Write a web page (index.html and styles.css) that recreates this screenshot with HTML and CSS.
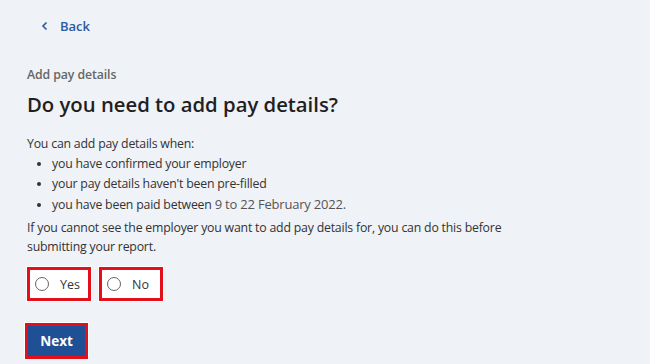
FILE: index.html
```html
<!DOCTYPE html>
<html lang="en">
<head>
<meta charset="utf-8">
<title>Add pay details</title>
<link rel="stylesheet" href="styles.css">
</head>
<body>
<main class="page">
  <a class="back" href="#">
    <svg class="back-icon" width="8" height="10" viewBox="0 0 8 10" aria-hidden="true"><path d="M5.5 1.5 L2 5 L5.5 8.5" fill="none" stroke="#2a5aa0" stroke-width="1.6"/></svg>
    <span>Back</span>
  </a>
  <p class="caption">Add pay details</p>
  <h1 class="title">Do you need to add pay details?</h1>
  <p class="lead">You can add pay details when:</p>
  <ul class="list">
    <li>you have confirmed your employer</li>
    <li>your pay details haven't been pre-filled</li>
    <li>you have been paid between <span class="dates">9 to 22 February 2022.</span></li>
  </ul>
  <p class="note">If you cannot see the employer you want to add pay details for, you can do this before submitting your report.</p>
  <div class="options">
    <label class="option"><span class="radio"></span><span>Yes</span></label>
    <label class="option"><span class="radio"></span><span>No</span></label>
  </div>
  <button class="next" type="button">Next</button>
</main>
</body>
</html>
```
FILE: styles.css
```css
html, body {
  margin: 0;
  padding: 0;
  background: #eff2f6;
}
body {
  font-family: "Open Sans", "Noto Sans", sans-serif;
  color: #333;
  font-size: 12.3px;
  letter-spacing: -0.2px;
}
.page {
  padding: 16px 0 0 27px;
  display: flex;
  flex-direction: column;
  align-items: flex-start;
}
.back {
  display: flex;
  align-items: center;
  gap: 11px;
  margin-left: 14px;
  color: #2a5aa0;
  text-decoration: none;
  font-weight: 600;
  font-size: 13px;
  letter-spacing: 0;
  line-height: 20px;
}
.caption {
  margin: 30px 0 0;
  color: #666;
  font-weight: 600;
  font-size: 12.3px;
  letter-spacing: -0.1px;
  line-height: 18px;
}
.title {
  margin: 6px 0 0;
  font-size: 20.3px;
  font-weight: 600;
  letter-spacing: 0;
  line-height: 28px;
  color: #1f1f1f;
}
.lead {
  margin: 16px 0 0;
  line-height: 20px;
}
.list {
  margin: 0;
  padding-left: 25px;
  line-height: 20px;
}
.list li::marker { font-size: 11px; }
.dates { font-size: 13px; color: #555; letter-spacing: -0.2px; }
.note {
  margin: 4px 0 0;
  width: 480px;
  line-height: 18.5px;
}
.options {
  margin-top: 11px;
  display: flex;
  gap: 8px;
}
.option {
  display: flex;
  align-items: center;
  gap: 11px;
  box-sizing: border-box;
  width: 64px;
  height: 34px;
  padding: 0 0 0 5px;
  background: #fff;
  border: 3px solid #e3101c;
  outline: 1px solid #fff;
  font-size: 12.5px;
  letter-spacing: 0;
  color: #333;
}
.radio {
  flex-shrink: 0;
  box-sizing: border-box;
  width: 14px;
  height: 14px;
  border: 1.3px solid #666;
  border-radius: 50%;
  background: #fff;
}
.next {
  margin-top: 22px;
  margin-left: -2px;
  box-sizing: border-box;
  width: 63px;
  height: 36px;
  background: #1f4f94;
  border: 3px solid #e3101c;
  outline: 1px solid #fff;
  color: #fff;
  font-family: inherit;
  font-weight: 700;
  font-size: 13.5px;
  letter-spacing: 0;
}
```
